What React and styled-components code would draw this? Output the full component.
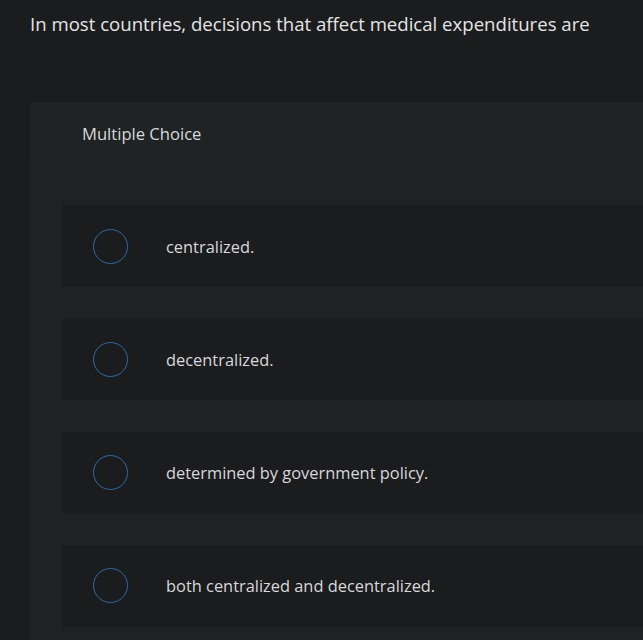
import React from "react";
import styled, { createGlobalStyle } from "styled-components";

const options = [
  "centralized.",
  "decentralized.",
  "determined by government policy.",
  "both centralized and decentralized.",
];

export default function App() {
  return (
    <>
      <GlobalStyle />
      <Page>
        <Question>In most countries, decisions that affect medical expenditures are</Question>
        <Panel>
          <PanelHeader>Multiple Choice</PanelHeader>
          <OptionList>
            {options.map((text) => (
              <Option key={text}>
                <Radio />
                <OptionText>{text}</OptionText>
              </Option>
            ))}
          </OptionList>
        </Panel>
      </Page>
    </>
  );
}

// ...............styled-components..........//

const GlobalStyle = createGlobalStyle`
  html, body {
    margin: 0;
    padding: 0;
    background-color: #1b1c1e;
    overflow: hidden;
  }
  body {
    font-family: "Open Sans", Lato, sans-serif;
  }
`;

const Page = styled.div`
  height: 640px;
  padding-left: 30px;
`;

const Question = styled.p`
  margin: 0;
  padding-top: 12px;
  height: 102px;
  box-sizing: border-box;
  font-size: 18.6px;
  line-height: 24px;
  color: #e4e4e4;
`;

const Panel = styled.section`
  background-color: #1f2223;
  border-radius: 3px 0 0 0;
  min-height: 560px;
`;

const PanelHeader = styled.div`
  height: 63px;
  display: flex;
  align-items: center;
  padding-left: 52px;
  font-size: 16.6px;
  color: #d6d8d9;
  background-color: #202324;
`;

const OptionList = styled.div`
  display: flex;
  flex-direction: column;
  gap: 31.33px;
  padding: 40px 0 0 32px;
`;

const Option = styled.div`
  height: 82px;
  display: flex;
  align-items: center;
  padding-left: 31px;
  background-color: #1b1c1e;
`;

const Radio = styled.span`
  width: 33px;
  height: 33px;
  border: 1.5px solid #2c6aa6;
  border-radius: 50%;
  flex-shrink: 0;
`;

const OptionText = styled.span`
  margin-left: 38px;
  font-size: 16.4px;
  color: #d6d8d9;
`;
